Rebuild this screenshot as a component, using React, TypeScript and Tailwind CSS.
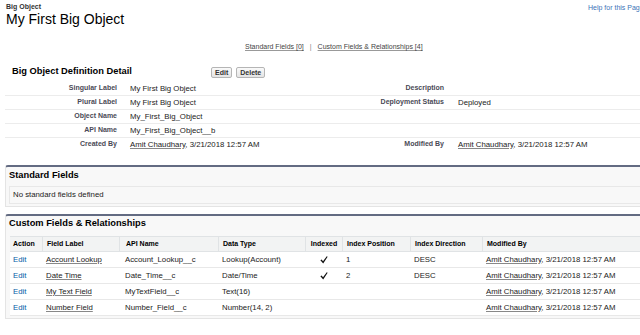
import React from "react";

const details = [
    { l: "Singular Label", v: "My First Big Object", l2: "Description", v2: "" },
    { l: "Plural Label", v: "My First Big Object", l2: "Deployment Status", v2: "Deployed" },
    { l: "Object Name", v: "My_First_Big_Object", l2: "", v2: "" },
    { l: "API Name", v: "My_First_Big_Object__b", l2: "", v2: "" },
];

const fields = [
    { label: "Account Lookup", api: "Account_Lookup__c", type: "Lookup(Account)", indexed: true, pos: "1", dir: "DESC" },
    { label: "Date Time", api: "Date_Time__c", type: "Date/Time", indexed: true, pos: "2", dir: "DESC" },
    { label: "My Text Field", api: "MyTextField__c", type: "Text(16)", indexed: false, pos: "", dir: "" },
    { label: "Number Field", api: "Number_Field__c", type: "Number(14, 2)", indexed: false, pos: "", dir: "" },
];

const Check = () => (
    <svg width="8" height="8" viewBox="0 0 9 9" className="inline-block">
        <path d="M0.4 4.9 L1.8 3.9 L3.4 5.9 L7.6 0.2 L8.6 0.8 L3.6 8.4 Z" fill="#111" />
    </svg>
);

const UserLink = () => (
    <span>
        <span className="underline decoration-[#888]">Amit Chaudhary</span>, 3/21/2018 12:57 AM
    </span>
);

export default function App() {
    return (
        <div className="w-[640px] h-[335px] overflow-hidden bg-white font-['Liberation_Sans',Arial,sans-serif] text-[#222]">
            <div className="w-[700px]">
                {/* page header */}
                <div className="flex pl-[6px] pt-[3px]">
                    <div className="w-[582px]">
                        <div className="text-[7px] leading-[8px] font-bold text-[#333]">Big Object</div>
                        <div className="text-[14px] leading-[16px] text-black">My First Big Object</div>
                    </div>
                    <a className="text-[7px] leading-[8px] pt-[1px] text-[#3e73b8]">Help for this Page</a>
                </div>

                <div className="mt-[16px] pl-[245px] text-[7px] leading-[8px] text-[#444]">
                    <span className="underline decoration-[#999]">Standard Fields [0]</span>
                    <span className="px-[6px] text-[#888]">|</span>
                    <span className="underline decoration-[#999]">Custom Fields &amp; Relationships [4]</span>
                </div>

                {/* detail */}
                <div className="mt-[14px] flex items-center h-[14px] pl-[12px]">
                    <div className="w-[199px] text-[9.3px] font-bold text-black">Big Object Definition Detail</div>
                    <div className="flex gap-[4px]">
                        <button className="h-[11px] px-[3px] text-[7px] leading-[9px] font-bold text-[#333] border border-[#b5b5b5] rounded-[2px] bg-gradient-to-b from-[#fafafa] to-[#e4e4e4]">Edit</button>
                        <button className="h-[11px] px-[3px] text-[7px] leading-[9px] font-bold text-[#333] border border-[#b5b5b5] rounded-[2px] bg-gradient-to-b from-[#fafafa] to-[#e4e4e4]">Delete</button>
                    </div>
                </div>

                <div className="mt-[3px] ml-[5px]">
                    {details.map((d) => (
                        <div key={d.l} className="grid grid-cols-[112px_213px_114px_1fr] items-center h-[14px] border-b border-[#ececec]">
                            <div className="text-right text-[7px] font-bold text-[#4a4a56]">{d.l}</div>
                            <div className="pl-[13px] text-[7.8px]">{d.v}</div>
                            <div className="text-right text-[7px] font-bold text-[#4a4a56]">{d.l2}</div>
                            <div className="pl-[14px] text-[7.8px]">{d.v2}</div>
                        </div>
                    ))}
                    <div className="grid grid-cols-[112px_213px_114px_1fr] items-center h-[13px]">
                        <div className="text-right text-[7px] font-bold text-[#4a4a56]">Created By</div>
                        <div className="pl-[13px] text-[7.8px]"><UserLink /></div>
                        <div className="text-right text-[7px] font-bold text-[#4a4a56]">Modified By</div>
                        <div className="pl-[14px] text-[7.8px]"><UserLink /></div>
                    </div>
                </div>

                {/* standard fields */}
                <div className="mt-[14px] ml-[5px] border-t-2 border-x border-b border-x-[#e4e4e4] border-b-[#e4e4e4] border-t-[#636b82] rounded-t-[3px] bg-[#f8f8f8] pb-[2px]">
                    <div className="pt-[1px] pl-[3px] leading-[14px] text-[9.3px] font-bold text-black">Standard Fields</div>
                    <div className="mt-[4px] ml-[3px] h-[18px] flex items-center border-y border-l border-[#e8e8e8] pl-[3px] text-[7.8px]">
                        No standard fields defined
                    </div>
                </div>

                {/* custom fields */}
                <div className="mt-[7px] ml-[5px] border-t-2 border-x border-b border-x-[#e4e4e4] border-b-[#e4e4e4] border-t-[#636b82] rounded-t-[3px] bg-[#f8f8f8] pb-[2px]">
                    <div className="pl-[3px] leading-[14px] text-[9.3px] font-bold text-black">Custom Fields &amp; Relationships</div>
                    <div className="mt-[6px] ml-[4px]">
                        <div className="grid grid-cols-[32px_77px_99px_87px_37px_68px_72px_1fr] h-[16px] items-stretch border-y border-[#e0e3e5] bg-[#f2f3f3] text-[7px] font-bold text-black">
                            <div className="flex items-center pl-[3px]">Action</div>
                            <div className="flex items-center pl-[4px] border-l border-[#e0e3e5]">Field Label</div>
                            <div className="flex items-center pl-[6px] border-l border-[#e0e3e5]">API Name</div>
                            <div className="flex items-center pl-[4px] border-l border-[#e0e3e5]">Data Type</div>
                            <div className="flex items-center justify-center border-l border-[#e0e3e5]">Indexed</div>
                            <div className="flex items-center pl-[4px] border-l border-[#e0e3e5]">Index Position</div>
                            <div className="flex items-center pl-[4px] border-l border-[#e0e3e5]">Index Direction</div>
                            <div className="flex items-center pl-[4px] border-l border-[#e0e3e5]">Modified By</div>
                        </div>
                        {fields.map((f) => (
                            <div key={f.api} className="grid grid-cols-[32px_77px_99px_87px_37px_68px_72px_1fr] h-[16px] items-center border-b border-[#e8e8e8] bg-white text-[7.8px]">
                                <div className="pl-[3px] text-[#015ba7]">Edit</div>
                                <div className="pl-[4px]"><span className="underline decoration-[#888]">{f.label}</span></div>
                                <div className="pl-[6px]">{f.api}</div>
                                <div className="pl-[4px]">{f.type}</div>
                                <div className="flex justify-center">{f.indexed && <Check />}</div>
                                <div className="pl-[4px]">{f.pos}</div>
                                <div className="pl-[4px]">{f.dir}</div>
                                <div className="pl-[4px]"><UserLink /></div>
                            </div>
                        ))}
                    </div>
                </div>
            </div>
        </div>
    );
}
